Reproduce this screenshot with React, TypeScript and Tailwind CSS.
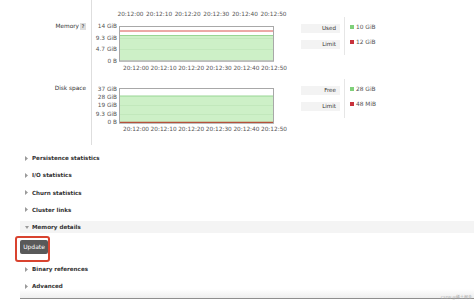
import React from "react";

const F = "DejaVu Sans, Verdana, sans-serif";

function XLabels({ y, start, step }: { y: number; start: number; step: number }) {
  const labels = ["20:12:00", "20:12:10", "20:12:20", "20:12:30", "20:12:40", "20:12:50"];
  return (
    <>
      {labels.map((l, i) => (
        <text
          key={l}
          x={start + i * step}
          y={y}
          textAnchor="middle"
          dominantBaseline="central"
          fontSize={5.8}
          fontFamily={F}
          fill="#555"
        >
          {l}
        </text>
      ))}
    </>
  );
}

function YLabels({ items }: { items: [string, number][] }) {
  return (
    <>
      {items.map(([t, y]) => (
        <text
          key={t + y}
          x={25}
          y={y}
          textAnchor="end"
          dominantBaseline="central"
          fontSize={5.8}
          fontFamily={F}
          fill="#555"
        >
          {t}
        </text>
      ))}
    </>
  );
}

function Charts() {
  return (
    <svg width={200} height={145} viewBox="0 0 200 145" className="block shrink-0">
      <XLabels y={14} start={38.5} step={28.6} />
      {/* Memory chart */}
      <rect x={27.5} y={26.5} width={154} height={34.5} fill="#fff" stroke="#a8a8a8" strokeWidth={1} />
      <rect x={28} y={35.5} width={153} height={25} fill="#cdf0c7" />
      <line x1={28} x2={181} y1={35.5} y2={35.5} stroke="#98d594" strokeWidth={1} />
      <line x1={28} x2={181} y1={38.5} y2={38.5} stroke="#bfe6b9" strokeWidth={0.8} />
      <line x1={28} x2={181} y1={49.5} y2={49.5} stroke="#bfe6b9" strokeWidth={0.8} />
      <line x1={28} x2={181} y1={31} y2={31} stroke="#d9534f" strokeWidth={1} />
      <rect x={27.5} y={26.5} width={154} height={34.5} fill="none" stroke="#a8a8a8" strokeWidth={1} />
      <YLabels items={[["14 GiB", 26], ["9.3 GiB", 37.8], ["4.7 GiB", 49.3], ["0 B", 60.5]]} />
      <XLabels y={67.5} start={44} step={27.6} />

      {/* Disk chart */}
      <rect x={27.5} y={88.5} width={154} height={34.5} fill="#fff" stroke="#a8a8a8" strokeWidth={1} />
      <rect x={28} y={96} width={153} height={27} fill="#cdf0c7" />
      <line x1={28} x2={181} y1={96} y2={96} stroke="#98d594" strokeWidth={1} />
      <line x1={28} x2={181} y1={105.5} y2={105.5} stroke="#bfe6b9" strokeWidth={0.8} />
      <line x1={28} x2={181} y1={114.5} y2={114.5} stroke="#bfe6b9" strokeWidth={0.8} />
      <rect x={27.5} y={88.5} width={154} height={34.5} fill="none" stroke="#a8a8a8" strokeWidth={1} />
      <line x1={28} x2={181} y1={122.3} y2={122.3} stroke="#b5523a" strokeWidth={1.2} />
      <YLabels items={[["37 GiB", 88.5], ["28 GiB", 96.5], ["19 GiB", 105.2], ["9.3 GiB", 114.2], ["0 B", 122]]} />
      <XLabels y={128.5} start={44} step={27.6} />
    </svg>
  );
}

function Legend({
  rows,
  gap,
  height,
}: {
  rows: { label: string; value: string; color: string }[];
  gap: number;
  height: number;
}) {
  return (
    <div className="flex" style={{ height }}>
      <div className="flex flex-col w-[39px] pt-[7px]" style={{ gap }}>
        {rows.map((r) => (
          <div
            key={r.label}
            className="h-[9px] bg-[#f3f3f3] text-right pr-[4px] text-[5.6px] leading-[9px] text-[#333]"
          >
            {r.label}
          </div>
        ))}
      </div>
      <div className="ml-[4px] w-px bg-[#e6e6e6]" />
      <div className="flex flex-col pl-[5px] pt-[6px]" style={{ gap: gap }}>
        {rows.map((r) => (
          <div key={r.value} className="flex items-center h-[8px] text-[5.9px] leading-[8px] text-[#555]">
            <span className="w-[4px] h-[4px] mr-[2px]" style={{ background: r.color }} />
            {r.value}
          </div>
        ))}
      </div>
    </div>
  );
}

function TriRight() {
  return (
    <svg width={3} height={5} viewBox="0 0 3 5" className="block">
      <polygon points="0,0 3,2.5 0,5" fill="#9a9a9a" />
    </svg>
  );
}

function TriDown() {
  return (
    <svg width={4} height={3} viewBox="0 0 4 3" className="block">
      <polygon points="0,0 4,0 2,3" fill="#9a9a9a" />
    </svg>
  );
}

function Heading({ text }: { text: string }) {
  return (
    <div className="h-[17.2px] flex items-center pl-[5px]">
      <TriRight />
      <span className="ml-[4px] text-[5.6px] font-bold text-[#333] leading-[8px]">{text}</span>
    </div>
  );
}

export default function App() {
  return (
    <div className="relative w-[474px] h-[302px] bg-white overflow-hidden font-['DejaVu_Sans',Verdana,sans-serif]">
      <div className="flex h-[145px]">
        <div className="w-[92px] shrink-0 border-r border-[#dedede] flex flex-col items-end pr-[5px] text-[5.8px] leading-[8px] text-[#333]">
          <div className="mt-[22px] flex items-center">
            <span>Memory</span>
            <span className="ml-[1px] w-[6px] h-[7px] bg-[#dedede] text-[5px] font-bold text-[#666] flex items-center justify-center leading-none">
              ?
            </span>
          </div>
          <div className="mt-[54px]">Disk space</div>
        </div>
        <Charts />
        <div className="ml-[9px] flex flex-col">
          <div className="mt-[17px]">
            <Legend
              height={38}
              gap={7}
              rows={[
                { label: "Used", value: "10 GiB", color: "#7fd07a" },
                { label: "Limit", value: "12 GiB", color: "#c8323c" },
              ]}
            />
          </div>
          <div className="mt-[24px]">
            <Legend
              height={39}
              gap={7}
              rows={[
                { label: "Free", value: "28 GiB", color: "#7fd07a" },
                { label: "Limit", value: "48 MiB", color: "#c8323c" },
              ]}
            />
          </div>
        </div>
      </div>

      <div className="pl-[20px] pt-[4.7px] flex flex-col">
        <Heading text="Persistence statistics" />
        <Heading text="I/O statistics" />
        <Heading text="Churn statistics" />
        <Heading text="Cluster links" />
        <div className="h-[17.2px] flex items-center">
          <div className="w-full h-[12px] bg-[#f4f4f4] flex items-center pl-[5px]">
            <TriDown />
            <span className="ml-[3px] text-[5.6px] font-bold text-[#333] leading-[8px]">Memory details</span>
          </div>
        </div>
        <div className="relative mt-[4.3px] w-[28px] h-[14px] leading-none">
          <button className="block w-[28px] h-[14px] bg-[#595959] rounded-[2px] text-white text-[6px] leading-[14px] text-center p-0">
            Update
          </button>
          <div className="absolute left-[-5px] top-[-4px] w-[35px] h-[26px] border-2 border-[#d9432f] rounded-[3px]" />
        </div>
        <div className="mt-[6.7px]">
          <Heading text="Binary references" />
          <Heading text="Advanced" />
        </div>
        <div className="-mt-[6px] h-[10px] bg-linear-to-b from-transparent to-[#eeeeee] border-b border-[#8e8e8e]" />
      </div>
      <div className="absolute right-[2px] bottom-[2px] text-[4px] leading-[5px] text-[#a8a8a8] font-['Noto_Sans_CJK_SC',sans-serif]">
        CSDN @稀土掘金
      </div>
    </div>
  );
}
